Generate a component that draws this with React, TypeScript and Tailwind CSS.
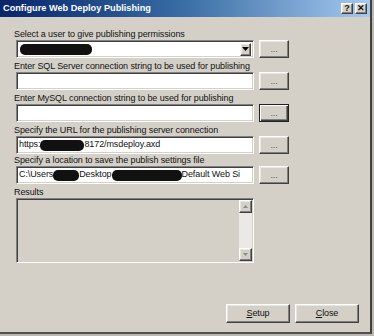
const raised =
  "border border-t-white border-l-white border-b-[#404040] border-r-[#404040] shadow-[inset_-1px_-1px_0_#808080,inset_1px_1px_0_#e8e6e1] bg-[#d4d0c8]"
const sunken =
  "border border-t-[#808080] border-l-[#808080] border-b-white border-r-white shadow-[inset_1px_1px_0_#404040,inset_-1px_-1px_0_#d4d0c8]"

function Blob({ w }: { w: number }) {
  return <span className="inline-block h-[11px] bg-[#111] rounded-[5px] align-middle" style={{ width: w }} />
}

function DotsButton({ focused = false }: { focused?: boolean }) {
  return (
    <button
      className={
        "ml-[5px] w-[30px] h-[18px] flex items-center justify-center text-[9px] text-[#555] leading-none " +
        (focused
          ? "border border-[#202020] bg-[#d4d0c8] shadow-[inset_1px_1px_0_#ffffff,inset_-1px_-1px_0_#404040,inset_-2px_-2px_0_#808080]"
          : raised)
      }
    >
      ...
    </button>
  )
}

function Field({ label, children, mt, focused }: { label: string; children?: React.ReactNode; mt: string; focused?: boolean }) {
  return (
    <div className={mt}>
      <div className="h-[12px] leading-[12px] pl-[14px]">{label}</div>
      <div className="flex items-center pl-[16px] h-[18px]">
        <div className={"w-[238px] h-[18px] bg-white flex items-center pl-[2px] overflow-hidden whitespace-nowrap " + sunken}>
          {children}
        </div>
        <DotsButton focused={focused} />
      </div>
    </div>
  )
}

export default function App() {
  return (
    <div className="w-[374px] h-[336px] bg-[#bcb8b0] overflow-hidden" style={{ fontFamily: '"Liberation Sans", Arial, sans-serif' }}>
      <div className="w-[372px] h-[334px] bg-[#d4d0c8] border-r-2 border-b-2 border-r-[#404040] border-b-[#505050] flex flex-col text-[9px] tracking-[-0.1px] text-[#111]">
        <div className="h-[17px] flex items-center justify-between bg-gradient-to-r from-[#0a246a] via-[#3a6ea5] to-[#a6caf0] pl-[3px] pr-[3px]">
          <span className="text-white font-bold text-[9.2px] tracking-normal">Configure Web Deploy Publishing</span>
          <div className="flex gap-[2px]">
            <div className={"w-[12px] h-[11px] flex items-center justify-center text-[9px] font-bold leading-none " + raised}>?</div>
            <div className={"w-[12px] h-[11px] flex items-center justify-center text-[9px] font-bold leading-none " + raised}>✕</div>
          </div>
        </div>

        <div className="pt-[11px] flex flex-col">
          <div>
            <div className="h-[12px] leading-[12px] pl-[14px]">Select a user to give publishing permissions</div>
            <div className="flex items-center pl-[16px] h-[18px]">
              <div className={"w-[238px] h-[18px] bg-white flex items-center justify-between pl-[3px] pr-[2px] " + sunken}>
                <Blob w={72} />
                <div className={"w-[11px] h-[13px] flex items-center justify-center " + raised}>
                  <svg width="7" height="4" viewBox="0 0 7 4">
                    <path d="M0 0h7L3.5 4z" fill="#000" />
                  </svg>
                </div>
              </div>
              <DotsButton />
            </div>
          </div>

          <Field label="Enter SQL Server connection string to be used for publishing" mt="mt-[2px]" />
          <Field label="Enter MySQL connection string to be used for publishing" mt="mt-[2px]" focused />
          <Field label="Specify the URL for the publishing server connection" mt="mt-[2px]">
            <span>https:</span>
            <Blob w={44} />
            <span>8172/msdeploy.axd</span>
          </Field>
          <Field label="Specify a location to save the publish settings file" mt="mt-0">
            <span>C:\Users</span>
            <Blob w={26} />
            <span>Desktop</span>
            <Blob w={70} />
            <span>Default Web Si</span>
          </Field>

          <div className="mt-[2px]">
            <div className="h-[12px] leading-[12px] pl-[14px]">Results</div>
            <div className="pl-[16px]">
              <div className={"w-[238px] h-[65px] bg-[#d4d0c8] flex justify-end " + sunken}>
                <div className="w-[13px] flex flex-col bg-[#ebe9e5] mr-[1px] my-[1px]">
                  <div className={"h-[13px] flex items-center justify-center " + raised}>
                    <svg width="5" height="3" viewBox="0 0 5 3">
                      <path d="M0 3h5L2.5 0z" fill="#8a8a8a" />
                    </svg>
                  </div>
                  <div className="flex-1" />
                  <div className={"h-[13px] flex items-center justify-center " + raised}>
                    <svg width="5" height="3" viewBox="0 0 5 3">
                      <path d="M0 0h5L2.5 3z" fill="#8a8a8a" />
                    </svg>
                  </div>
                </div>
              </div>
            </div>
          </div>

          <div className="flex justify-end gap-[5px] pr-[11px] mt-[41px]">
            <button className={"w-[64px] h-[19px] text-[9px] " + raised}>
              <span className="underline">S</span>etup
            </button>
            <button className={"w-[64px] h-[19px] text-[9px] " + raised}>
              <span className="underline">C</span>lose
            </button>
          </div>
        </div>
      </div>
    </div>
  )
}
